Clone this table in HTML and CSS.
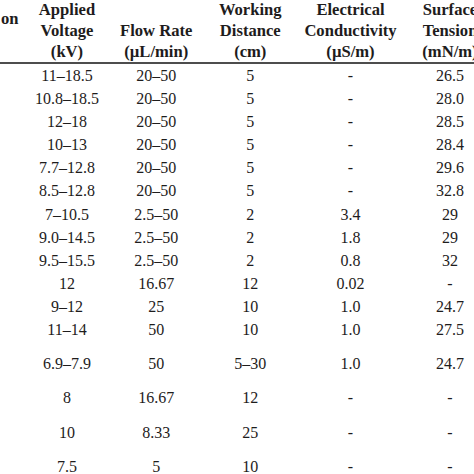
FILE: index.html
```html
<!DOCTYPE html>
<html>
<head>
<meta charset="utf-8">
<link rel="stylesheet" href="styles.css">
</head>
<body>
<div class="clip">
<table class="data">
  <colgroup>
    <col class="c1"><col class="c2"><col class="c3"><col class="c4"><col class="c5"><col class="c6">
  </colgroup>
  <thead>
    <tr>
      <th class="first">on</th>
      <th>Applied<br>Voltage<br>(kV)</th>
      <th>Flow Rate<br>(µL/min)</th>
      <th>Working<br>Distance<br>(cm)</th>
      <th>Electrical<br>Conductivity<br>(µS/m)</th>
      <th>Surface<br>Tension<br>(mN/m)</th>
    </tr>
  </thead>
  <tbody>
    <tr><td></td><td>11–18.5</td><td>20–50</td><td>5</td><td>-</td><td>26.5</td></tr>
    <tr><td></td><td>10.8–18.5</td><td>20–50</td><td>5</td><td>-</td><td>28.0</td></tr>
    <tr><td></td><td>12–18</td><td>20–50</td><td>5</td><td>-</td><td>28.5</td></tr>
    <tr><td></td><td>10–13</td><td>20–50</td><td>5</td><td>-</td><td>28.4</td></tr>
    <tr><td></td><td>7.7–12.8</td><td>20–50</td><td>5</td><td>-</td><td>29.6</td></tr>
    <tr><td></td><td>8.5–12.8</td><td>20–50</td><td>5</td><td>-</td><td>32.8</td></tr>
    <tr><td></td><td>7–10.5</td><td>2.5–50</td><td>2</td><td>3.4</td><td>29</td></tr>
    <tr><td></td><td>9.0–14.5</td><td>2.5–50</td><td>2</td><td>1.8</td><td>29</td></tr>
    <tr><td></td><td>9.5–15.5</td><td>2.5–50</td><td>2</td><td>0.8</td><td>32</td></tr>
    <tr><td></td><td>12</td><td>16.67</td><td>12</td><td>0.02</td><td>-</td></tr>
    <tr><td></td><td>9–12</td><td>25</td><td>10</td><td>1.0</td><td>24.7</td></tr>
    <tr class="tall"><td></td><td>11–14</td><td>50</td><td>10</td><td>1.0</td><td>27.5</td></tr>
    <tr class="tall"><td></td><td>6.9–7.9</td><td>50</td><td>5–30</td><td>1.0</td><td>24.7</td></tr>
    <tr class="tall"><td></td><td>8</td><td>16.67</td><td>12</td><td>-</td><td>-</td></tr>
    <tr class="tall"><td></td><td>10</td><td>8.33</td><td>25</td><td>-</td><td>-</td></tr>
    <tr class="tall"><td></td><td>7.5</td><td>5</td><td>10</td><td>-</td><td>-</td></tr>
  </tbody>
</table>
</div>
</body>
</html>
```

FILE: styles.css
```css
html, body {
  margin: 0;
  padding: 0;
  background: #ffffff;
}
.clip {
  width: 474px;
  height: 474px;
  overflow: hidden;
}
.data {
  table-layout: fixed;
  border-collapse: collapse;
  width: 576px;
  margin-left: -77.5px;
  margin-top: -1px;
  font-family: "Liberation Serif", "Times New Roman", serif;
  color: #1e1c1c;
}
.c1 { width: 100px; }
.c2 { width: 89px; }
.c3 { width: 89.5px; }
.c4 { width: 98.5px; }
.c5 { width: 102px; }
.c6 { width: 97px; }
.data th {
  font-weight: bold;
  font-size: 16.6px;
  line-height: 21px;
  padding: 0;
  text-align: center;
  vertical-align: bottom;
  border-bottom: 2px solid #4d4d4d;
  white-space: nowrap;
}
.data th.first {
  text-align: right;
  vertical-align: top;
  padding-top: 9px;
  padding-right: 4px;
}
.data td {
  font-size: 16px;
  line-height: 23.1px;
  height: 23.1px;
  padding: 0;
  text-align: center;
  vertical-align: top;
  white-space: nowrap;
}
.data tr.tall td {
  height: 34.2px;
}
```
